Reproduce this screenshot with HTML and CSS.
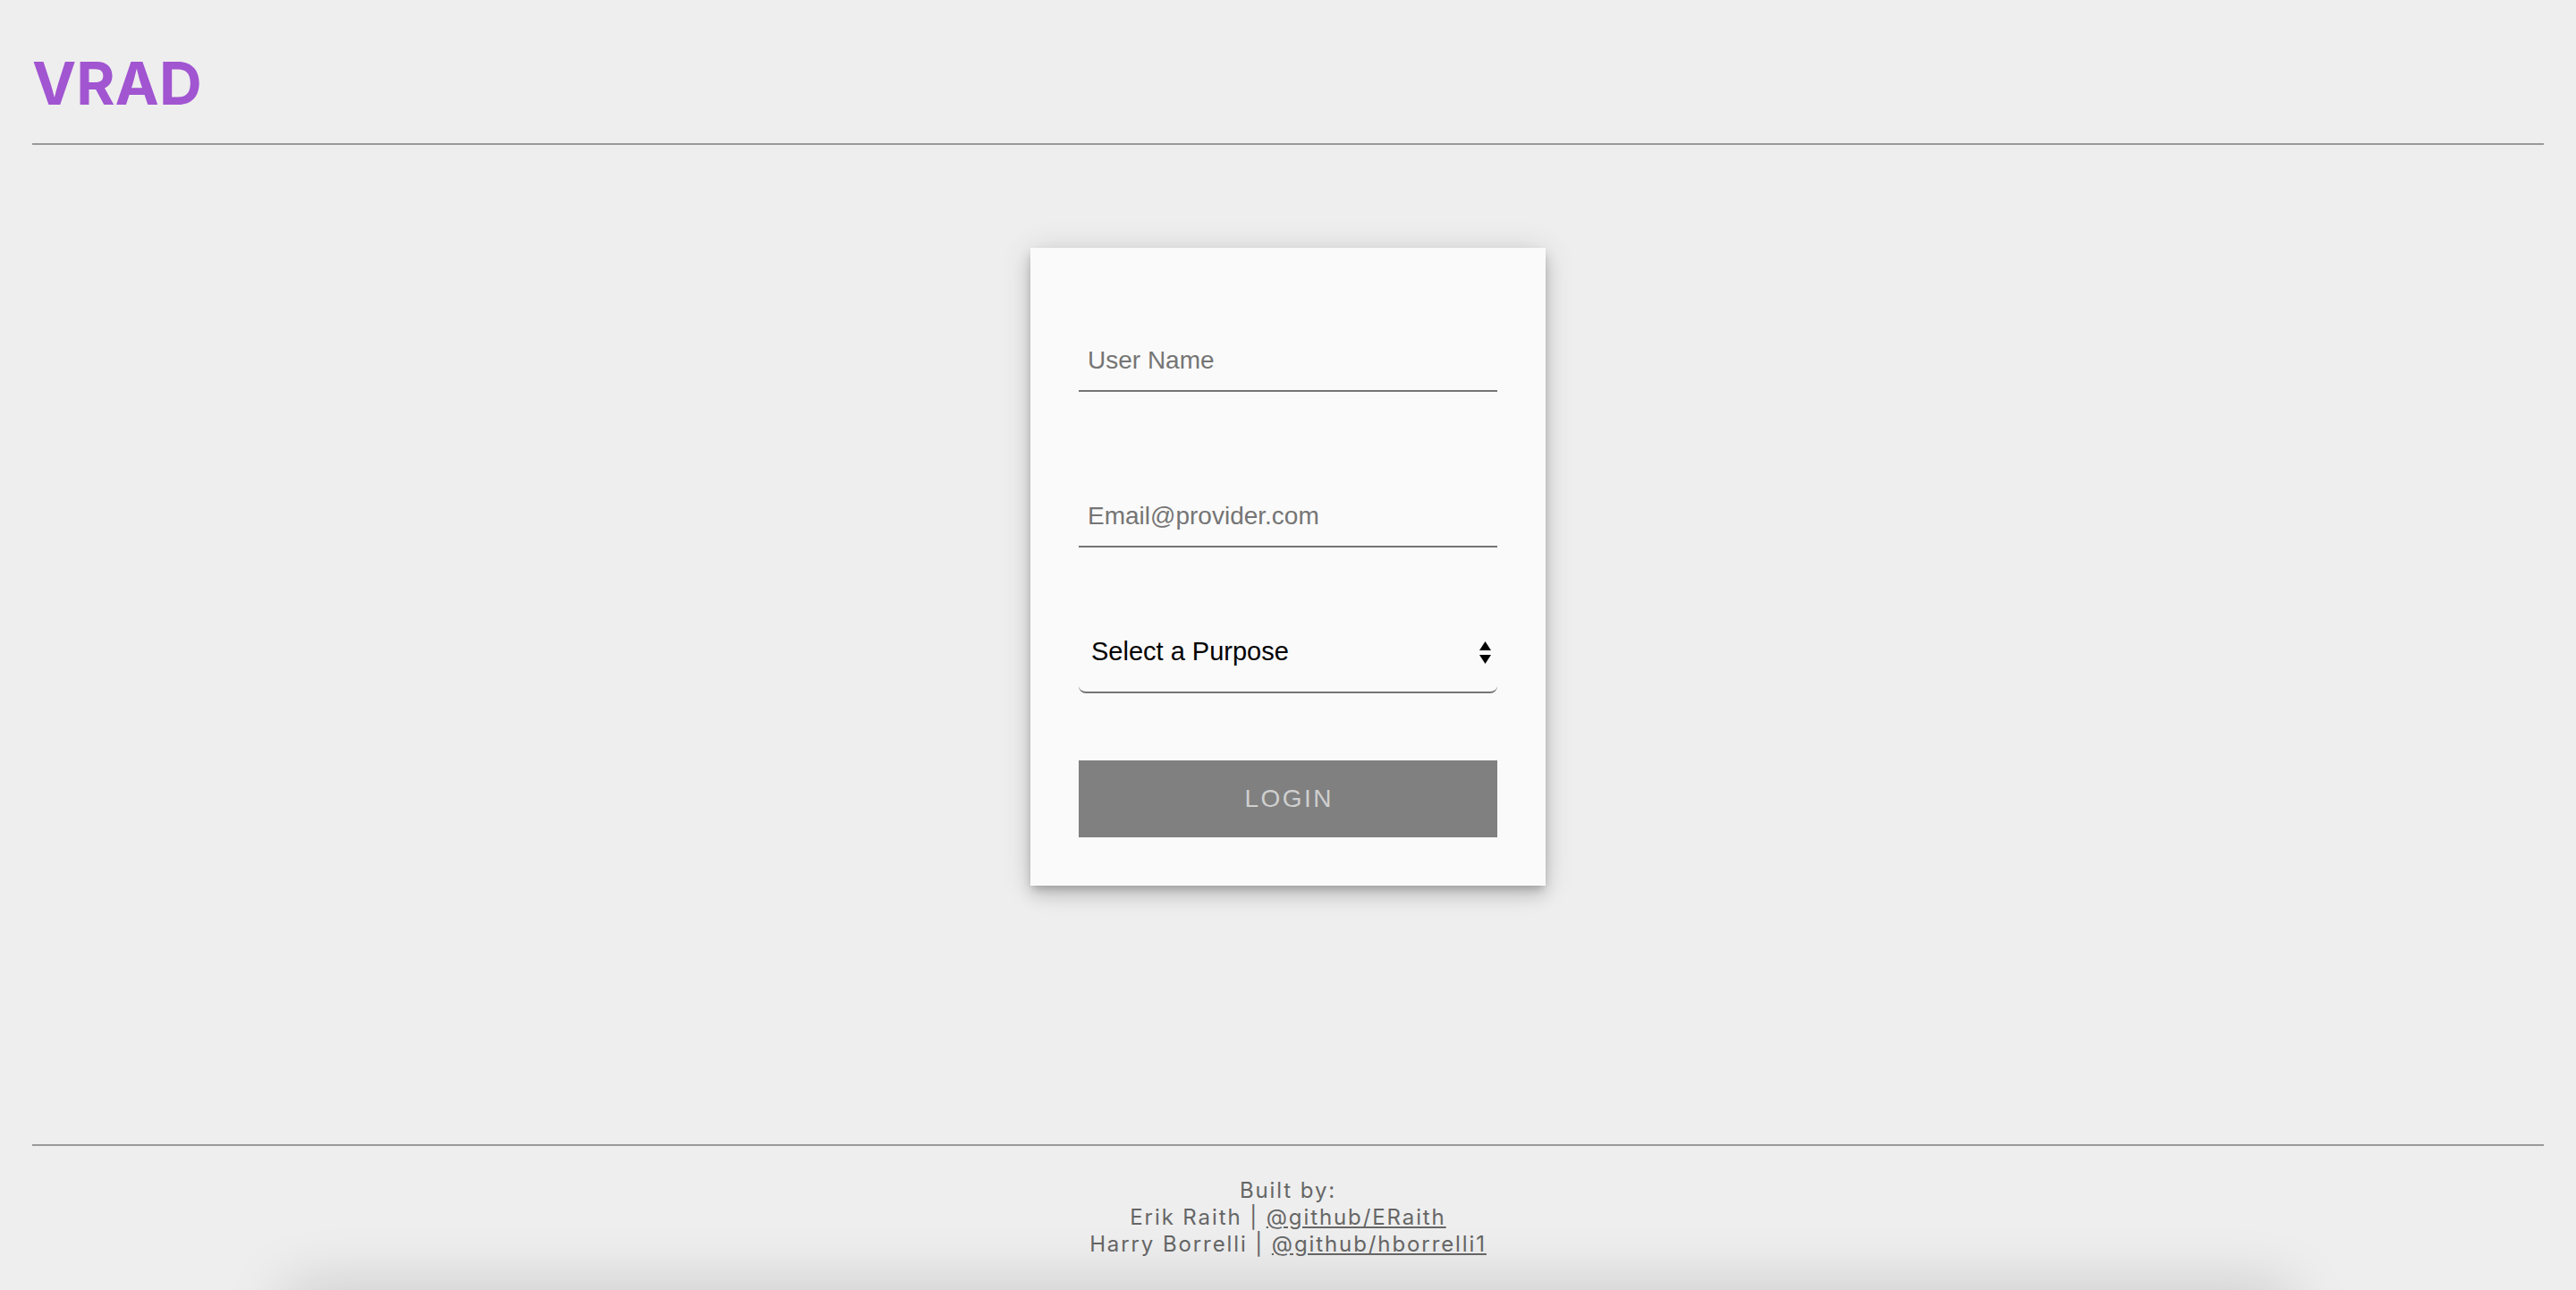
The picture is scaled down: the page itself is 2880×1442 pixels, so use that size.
FILE: index.html
```html
<!DOCTYPE html>
<html lang="en">
<head>
<meta charset="utf-8">
<title>VRAD</title>
<link rel="stylesheet" href="styles.css">
</head>
<body>
<div class="page">
  <header class="site-header">
    <h1 class="logo">VRAD</h1>
  </header>
  <main class="main">
    <form class="card">
      <input class="field" type="text" placeholder="User Name">
      <input class="field field-gap" type="email" placeholder="Email@provider.com">
      <div class="select-wrap">
        <select class="purpose">
          <option>Select a Purpose</option>
          <option>Vacation</option>
          <option>Business</option>
          <option>Other</option>
        </select>
        <svg class="select-arrows" viewBox="0 0 13 25" width="13" height="25" aria-hidden="true">
          <polygon points="0,10 6.5,0 13,10" fill="#000"/>
          <polygon points="0,15 13,15 6.5,25" fill="#000"/>
        </svg>
      </div>
      <button class="login" type="button">LOGIN</button>
    </form>
  </main>
  <footer class="site-footer">
    <p>Built by:</p>
    <p>Erik Raith | <a href="#">@github/ERaith</a></p>
    <p>Harry Borrelli | <a href="#">@github/hborrelli1</a></p>
  </footer>
</div>
</body>
</html>
```

FILE: styles.css
```css
html, body {
  margin: 0;
  padding: 0;
  background: #eeeeee;
  overflow: hidden;
}

.page {
  height: 100vh;
  display: flex;
  flex-direction: column;
  overflow: hidden;
}

.site-header {
  margin: 0 36px;
  padding-top: 53px;
  border-bottom: 2px solid #999999;
}

.logo {
  margin: 0 0 27px;
  font-family: Inter, "Liberation Sans", sans-serif;
  font-weight: 700;
  font-size: 66px;
  line-height: 80px;
  color: #a155d1;
}

.main {
  flex: 1;
}

.card {
  width: 576px;
  box-sizing: border-box;
  margin: 115px auto 0;
  padding: 105px 54px 54px;
  background: #fafafa;
  display: flex;
  flex-direction: column;
  box-shadow: 0 5px 9px -2px rgba(0, 0, 0, 0.2),
              0 11px 18px 0 rgba(0, 0, 0, 0.14),
              0 2px 33px 0 rgba(0, 0, 0, 0.12);
}

.field {
  display: block;
  width: 100%;
  height: 56px;
  box-sizing: border-box;
  padding: 0 10px 12px;
  border: none;
  border-bottom: 2px solid #757575;
  background: transparent;
  font-family: "Liberation Sans", Arial, sans-serif;
  font-size: 28px;
  color: #000;
  outline: none;
}

.field::placeholder {
  color: #757575;
}

.field-gap {
  margin-top: 118px;
}

.select-wrap {
  position: relative;
  margin-top: 83px;
}

.purpose {
  -webkit-appearance: none;
  appearance: none;
  display: block;
  width: 100%;
  height: 80px;
  box-sizing: border-box;
  padding: 0 40px 12px 14px;
  border: none;
  border-bottom: 2px solid #757575;
  border-radius: 0 0 8px 8px;
  background: transparent;
  font-family: "Liberation Sans", Arial, sans-serif;
  font-size: 29px;
  color: #000;
  outline: none;
}

.select-arrows {
  position: absolute;
  right: 7px;
  top: 22px;
  pointer-events: none;
}

.login {
  margin-top: 75px;
  width: 100%;
  height: 86px;
  border: none;
  padding: 0 0 0 2.5px;
  background: #808080;
  color: #cfcfcf;
  font-family: "Liberation Sans", Arial, sans-serif;
  font-size: 28px;
  letter-spacing: 2.5px;
}

.site-footer {
  position: relative;
  margin: 0 36px;
  padding: 35px 0 36px;
  border-top: 2px solid #999999;
  text-align: center;
  font-family: Inter, "Liberation Sans", sans-serif;
  font-size: 24px;
  line-height: 30px;
  letter-spacing: 1.9px;
  color: #666666;
}

.site-footer p {
  margin: 0;
}

.site-footer a {
  color: inherit;
  text-decoration: underline;
}

.site-footer::after {
  content: "";
  position: absolute;
  left: 284px;
  right: 284px;
  top: 100%;
  height: 60px;
  box-shadow: 0 0 70px 0 rgba(0, 0, 0, 0.18);
}
```
